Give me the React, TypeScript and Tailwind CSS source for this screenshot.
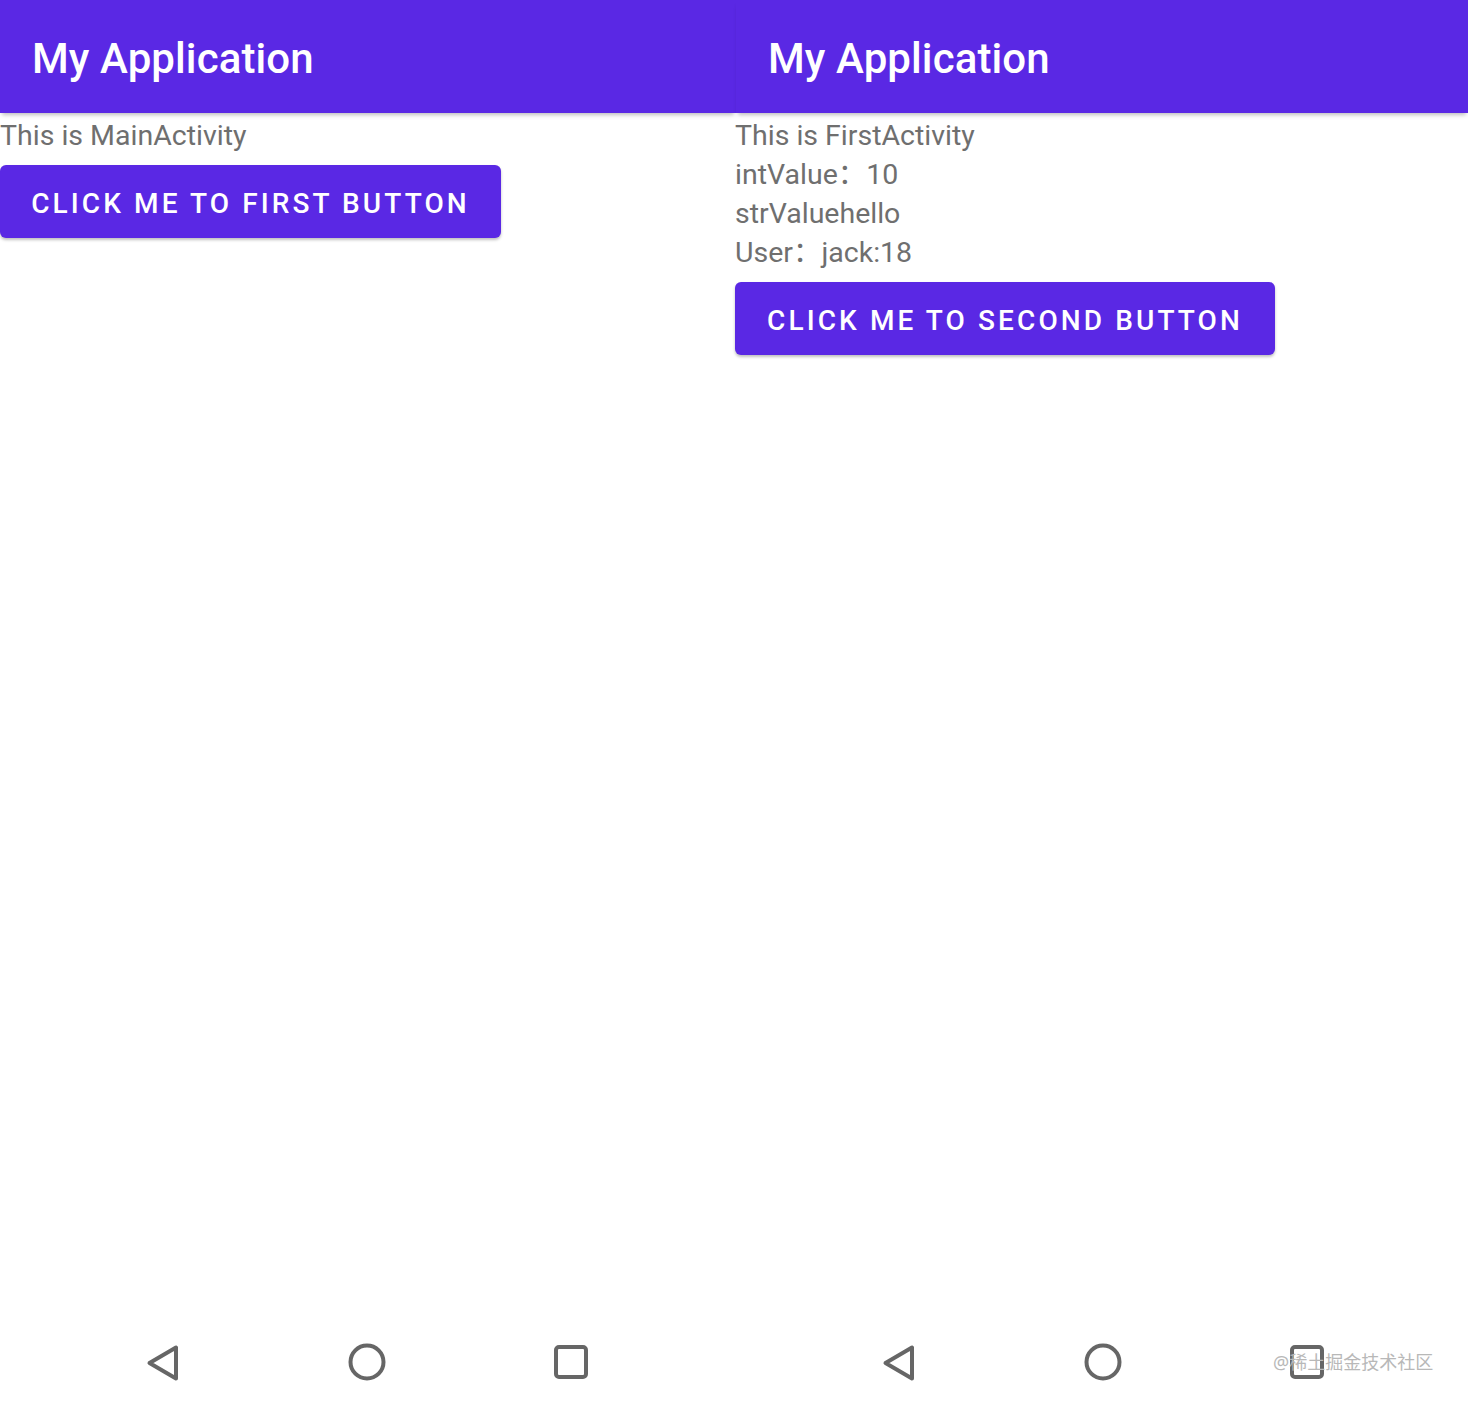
import React from "react";

const Nav = ({ watermark }: { watermark?: boolean }) => (
  <div className="relative h-[92px] shrink-0">
    <div className="absolute left-[140px] top-[19px]">
      <svg width="48" height="48" viewBox="0 0 48 48">
        <path d="M9.5 28 L36 12.5 L36 43.5 Z" fill="none" stroke="#666666" strokeWidth="4" strokeLinejoin="round" />
      </svg>
    </div>
    <div className="absolute left-[347px] top-[26px]">
      <svg width="40" height="40" viewBox="0 0 40 40">
        <circle cx="20" cy="20" r="16.5" fill="none" stroke="#666666" strokeWidth="4" />
      </svg>
    </div>
    <div className="absolute left-[551px] top-[26px]">
      <svg width="40" height="40" viewBox="0 0 40 40">
        <rect x="5" y="5" width="30" height="30" rx="3" fill="none" stroke="#666666" strokeWidth="4" />
      </svg>
    </div>
    {watermark && (
      <div
        className="absolute left-[537px] top-[35px] text-[18px] leading-[22px] text-[#b8b8b8] whitespace-nowrap"
        style={{ fontFamily: '"Noto Sans", "Noto Sans CJK SC", sans-serif' }}
      >
        @稀土掘金技术社区
      </div>
    )}
  </div>
);

const Header = () => (
  <div className="relative z-10 h-[113px] bg-[#5a28e4] flex items-center pl-[32px] pt-[4px] shadow-[0_4px_4px_-2px_rgba(0,0,0,0.25)] shrink-0">
    <span className="text-white text-[42px] font-medium leading-none tracking-[0.1px]">My Application</span>
  </div>
);

const Button = ({ label, width }: { label: string; width: string }) => (
  <div className="mt-[10px]">
    <div
      className={`${width} h-[73px] rounded-[6px] bg-[#5a28e4] flex items-center justify-center pt-[3px] text-white text-[28px] font-medium tracking-[3.1px] shadow-[0_2px_3px_rgba(0,0,0,0.25)]`}
    >
      {label}
    </div>
  </div>
);

export default function App() {
  return (
    <div
      className="w-[1468px] h-[1408px] bg-white grid grid-cols-[736px_732px] overflow-hidden"
      style={{ fontFamily: 'Roboto, "Noto Sans", "Noto Sans CJK SC", sans-serif' }}
    >
      <div className="flex flex-col h-[1408px]">
        <Header />
        <div className="flex-1 flex flex-col items-start pt-[3px] text-[#6f6f6f] text-[28.5px] leading-[39px]">
          <div>This is MainActivity</div>
          <Button label="CLICK ME TO FIRST BUTTON" width="w-[501px]" />
        </div>
        <Nav />
      </div>
      <div className="flex flex-col h-[1408px]">
        <Header />
        <div className="flex-1 flex flex-col items-start pt-[3px] text-[#6f6f6f] text-[28.5px] leading-[39px]">
          <div className="-ml-[1px]">This is FirstActivity</div>
          <div className="-ml-[1px]">intValue：10</div>
          <div className="-ml-[1px]">strValuehello</div>
          <div className="-ml-[1px]">User：jack:18</div>
          <div className="-ml-[1px]">
            <Button label="CLICK ME TO SECOND BUTTON" width="w-[540px]" />
          </div>
        </div>
        <Nav watermark />
      </div>
    </div>
  );
}
